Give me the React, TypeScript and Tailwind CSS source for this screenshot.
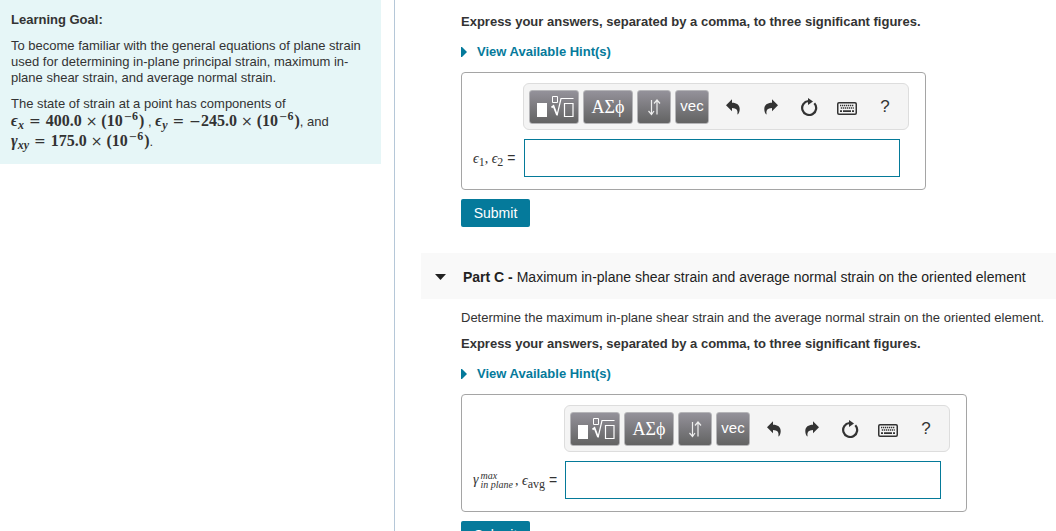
import React, { useState } from 'react';

interface ToolButtonProps {
  label: string;
  className: string;
  children: React.ReactNode;
}

const ToolButton: React.FC<ToolButtonProps> = ({ label, className, children }) => (
  <button
    type="button"
    aria-label={label}
    className={`${className} h-[34px] flex items-center justify-center rounded-[3px] border border-[#b5b5b8] bg-linear-to-b from-[#94929a] to-[#636363] text-white`}
  >
    {children}
  </button>
);

const IconButton: React.FC<{ label: string; children: React.ReactNode }> = ({ label, children }) => (
  <button type="button" aria-label={label} className="w-[38px] h-[34px] flex items-center justify-center text-[#333]">
    {children}
  </button>
);

const UndoIcon = ({ flipped = false }: { flipped?: boolean }) => (
  <svg width="14" height="16" viewBox="0 0 14 16" className={flipped ? '-scale-x-100' : ''} fill="currentColor">
    <path d="M0 6.2 6 .3v3.4c4.700 0 7.600 2.100 7.700 6.300 0 2.100-.6 3.900-1.700 5.300-.3.300-.7.100-.6-.3.700-3.900-.9-5.900-5.400-6v3.300z" />
  </svg>
);

const ResetIcon = () => (
  <svg width="18" height="18" viewBox="0 0 18 18" fill="none" stroke="currentColor" strokeWidth="2.2">
    <path d="M14.300 5.200A7 7 0 1 1 8.500 3" />
    <path d="M8 0l5 3.400-5 3.600z" fill="currentColor" stroke="none" />
  </svg>
);

const KeyboardIcon = () => (
  <svg width="20" height="13" viewBox="0 0 20 13" fill="none" stroke="currentColor" className="mt-1">
    <rect x=".75" y=".75" width="18.5" height="11.500" rx="1.200" strokeWidth="1.500" />
    <path d="M3 3.500h14M3.800 6h13" strokeWidth="1.600" strokeDasharray="1.300 .7" />
    <path d="M3 9.200h2M6 9.200h8M15 9.200h2" strokeWidth="1.800" />
  </svg>
);

const TemplateIcon = () => (
  <svg width="40" height="24" viewBox="0 0 40 24" fill="none" stroke="white">
    <path d="M3 8h10v14H3z" fill="white" stroke="none" />
    <path d="M18.500 1.500h5v6h-5z" />
    <path d="M17.500 12.500l2-1.500 3.500 9" strokeWidth="1.800" />
    <path d="M23 20.500 27 3.500h12.500" strokeWidth="1.200" />
    <path d="M30.500 8.500h8.500v13h-8.500z" strokeWidth="1.200" />
  </svg>
);

const ArrowsIcon = () => (
  <svg width="14" height="18" viewBox="0 0 14 18" fill="none" stroke="#eee" strokeWidth="1.200">
    <path d="M4.500 2v14M1.500 13l3 3.500L7 13" />
    <path d="M10 16.500V3M7 5.500l3-3.500 3 3.500" />
  </svg>
);

const Toolbar = () => (
  <div role="toolbar" className="w-[386px] h-[47px] flex items-center rounded-[6px] border border-[#ddd] bg-[#f4f4f4] pl-[5px]">
    <div className="flex gap-1 pr-[5px]">
      <ToolButton label="Templates" className="w-[50px]"><TemplateIcon /></ToolButton>
      <ToolButton label="Symbols" className="w-[50px] font-['Liberation_Serif',serif] text-[18px]">ΑΣϕ</ToolButton>
      <ToolButton label="Arrows" className="w-[34px]"><ArrowsIcon /></ToolButton>
      <ToolButton label="Vector" className="w-[34px] text-[15px] pb-0.5">vec</ToolButton>
    </div>
    <IconButton label="Undo"><UndoIcon /></IconButton>
    <IconButton label="Redo"><UndoIcon flipped /></IconButton>
    <IconButton label="Reset"><ResetIcon /></IconButton>
    <IconButton label="Keyboard shortcuts"><KeyboardIcon /></IconButton>
    <IconButton label="Help"><span className="text-[17px]">?</span></IconButton>
  </div>
);

interface AnswerFormProps {
  id: string;
  labelClass: string;
  label: React.ReactNode;
}

const AnswerForm: React.FC<AnswerFormProps> = ({ id, labelClass, label }) => {
  const [value, setValue] = useState('');

  return (
    <form onSubmit={(e) => e.preventDefault()}>
      <div className="mt-3 w-fit rounded-[4px] border border-[#a5a5a5] pt-[10px] pr-4 pb-3 pl-[11px]">
        <div className="flex flex-col items-end">
          <Toolbar />
          <div className="mt-[9px] self-stretch flex items-center pr-[9px]">
            <label htmlFor={id} className={`${labelClass} shrink-0 flex items-center whitespace-nowrap`}>
              {label}
            </label>
            <input
              id={id}
              type="text"
              value={value}
              onChange={(e) => setValue(e.target.value)}
              className="w-[376px] h-[38px] border border-[#057a99] bg-white px-2 outline-none"
            />
          </div>
        </div>
      </div>
      <button type="submit" className="mt-[9px] h-7 w-[69px] rounded-[2px] bg-[#057a9b] text-sm text-white">
        Submit
      </button>
    </form>
  );
};

const Instructions = () => (
  <p className="font-bold">Express your answers, separated by a comma, to three significant figures.</p>
);

const HintLink = () => (
  <a href="#hints" className="mt-[14px] flex w-fit items-center font-bold text-[#057a9b]">
    <svg width="6" height="10" viewBox="0 0 6 10" fill="currentColor" className="mr-[10px]">
      <path d="M0 0h1l5 5-5 5H0z" />
    </svg>
    View Available Hint(s)
  </a>
);

const OP = "font-['DejaVu_Sans',sans-serif] font-normal text-[14px] leading-none";

const Equals = () => <span className={`${OP} mx-[5px]`}>=</span>;

// renders "value × (10^-6)"
const Micro = ({ value, negative = false }: { value: string; negative?: boolean }) => (
  <>
    {negative && <span className={OP}>−</span>}
    {value}
    <span className={`${OP} mx-1`}>×</span>
    (10
    <sup className="mx-px text-[12px]">
      <span className="font-['DejaVu_Sans',sans-serif] font-normal text-[10px]">−</span>6
    </sup>
    )
  </>
);

const Variable = ({ name, sub }: { name: string; sub: string }) => (
  <i>
    {name}
    <sub className="text-[12px]">{sub}</sub>
  </i>
);

const MATH = "font-['Liberation_Serif',serif] font-bold text-[16px] leading-none";
const LABEL_MATH = "font-['Liberation_Serif',serif] text-[14px]";
const LABEL_EQUALS = "ml-1 font-['Liberation_Sans',sans-serif]";

export default function App() {
  return (
    <div className="flex h-screen overflow-hidden bg-white font-['Liberation_Sans',Arial,sans-serif] text-[13px] leading-4 text-[#333]">
      <aside className="w-[395px] shrink-0 border-r border-[#b5c7d8] pr-[13px]">
        <section className="flex flex-col gap-[10px] bg-[#e6f6f7] px-[11px] pt-3 pb-3">
          <h2 className="font-bold">Learning Goal:</h2>
          <p>
            To become familiar with the general equations of plane strain used for determining in-plane principal
            strain, maximum in-plane shear strain, and average normal strain.
          </p>
          <div>
            <p>The state of strain at a point has components of</p>
            <p className="leading-5 whitespace-nowrap">
              <span className={MATH}>
                <Variable name="ϵ" sub="x" />
                <Equals />
                <Micro value="400.0" />
              </span>{' '}
              ,{' '}
              <span className={MATH}>
                <Variable name="ϵ" sub="y" />
                <Equals />
                <Micro value="245.0" negative />
              </span>
              , and
            </p>
            <p className="leading-5 whitespace-nowrap">
              <span className={MATH}>
                <Variable name="γ" sub="xy" />
                <Equals />
                <Micro value="175.0" />
              </span>
              .
            </p>
          </div>
        </section>
      </aside>

      <main className="min-w-0 flex-1 pl-[26px]">
        <section className="pt-[14px] pl-10">
          <Instructions />
          <HintLink />
          <AnswerForm
            id="principal-strains"
            labelClass="w-[51px]"
            label={
              <span className={LABEL_MATH}>
                <i>ϵ</i><sub className="text-[12px]">1</sub>, <i>ϵ</i><sub className="text-[12px]">2</sub>
                <span className={LABEL_EQUALS}>=</span>
              </span>
            }
          />
        </section>

        <h2 className="mt-[26px] flex h-[46px] items-center bg-[#f9f9f9] pt-0.5 pl-[14px] text-sm whitespace-nowrap text-[#222]">
          <svg width="11" height="6" viewBox="0 0 11 6" fill="currentColor" className="mr-[17px]">
            <path d="M0 0h11L5.500 6z" />
          </svg>
          <span>
            <b>Part C -</b> Maximum in-plane shear strain and average normal strain on the oriented element
          </span>
        </h2>

        <section className="pt-[11px] pl-10">
          <p className="mb-[10px] whitespace-nowrap">
            Determine the maximum in-plane shear strain and the average normal strain on the oriented element.
          </p>
          <Instructions />
          <HintLink />
          <AnswerForm
            id="shear-strain"
            labelClass="w-[92px]"
            label={
              <span className={`${LABEL_MATH} flex items-center`}>
                <i>γ</i>
                <i className="mx-0.5 flex flex-col text-[10px] leading-[9px]">
                  <span>max</span>
                  <span>in plane</span>
                </i>
                <span>
                  , <i>ϵ</i><sub className="text-[12px]">avg</sub>
                  <span className={LABEL_EQUALS}>=</span>
                </span>
              </span>
            }
          />
        </section>
      </main>
    </div>
  );
}
